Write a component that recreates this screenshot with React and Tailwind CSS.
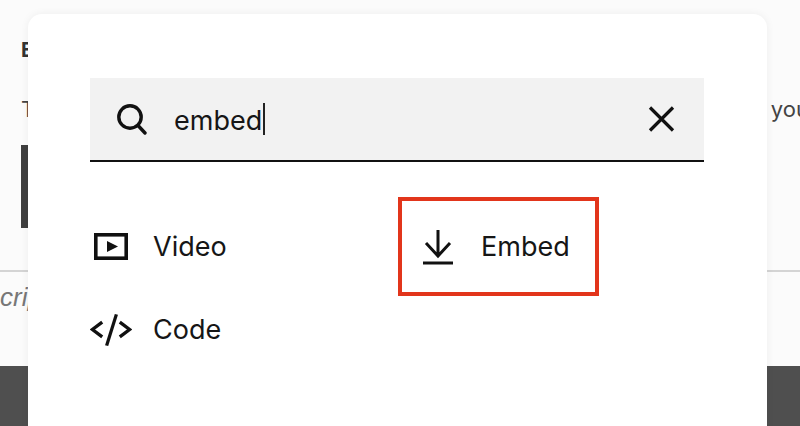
export default function App() {
    return (
        <div className="relative h-[426px] w-[800px] overflow-hidden bg-[#fbfbfb] font-['Inter','Liberation_Sans',sans-serif] text-[#161616]">
            {/* Page behind the dialog */}
            <div className="flex h-full flex-col">
                <div className="h-[272px] border-b-2 border-[#d4d4d4] px-[21px] pt-[38px]">
                    <h2 className="text-[20px] leading-[24px] font-bold text-[#333]">Embed</h2>
                    <p className="mt-[35px] flex justify-between text-[22px] leading-[24px] text-[#444]">
                        <span>The</span>
                        <span className="-mr-[30px]">the you</span>
                    </p>
                    <div className="mt-[24px] h-[83px] w-[300px] bg-[#3f3f3f]"></div>
                </div>
                <p className="h-[94px] pt-[10px] font-['Liberation_Sans',sans-serif] text-[26px] leading-[30px] text-[#777] italic">cription</p>
                <div className="flex-1 bg-[#4f4f4f]"></div>
            </div>

            {/* Dialog */}
            <div className="absolute top-[14px] left-[28px] h-[440px] w-[739px] rounded-[14px] bg-white px-[62px] pt-[64px] shadow-[0_0_8px_rgba(0,0,0,0.06)]">
                <div className="flex h-[84px] w-[614px] items-center border-b-2 border-[#111] bg-[#f2f2f2] pr-[29px] pl-[26px]">
                    <svg width="32" height="32" viewBox="0 0 32 32" fill="none" stroke="#111" strokeWidth="3.4" strokeLinecap="round">
                        <circle cx="14" cy="14" r="11.2" />
                        <path d="M22.5 23 29 30" />
                    </svg>
                    <span className="mt-[3px] ml-[26px] text-[27px] leading-[32px]">embed</span>
                    <span className="ml-[1px] h-[32px] w-[2px] bg-[#222]"></span>
                    <svg className="ml-auto" width="28" height="28" viewBox="0 0 28 28" fill="none" stroke="#111" strokeWidth="3.2">
                        <path d="M3 2.5 26 25.5M26 2.5 3 25.5" />
                    </svg>
                </div>

                <div className="mt-[43px] grid grid-cols-[309px_200px] auto-rows-[83px]">
                    <div className="flex items-center">
                        <span className="flex w-[42px] justify-center">
                            <svg width="34" height="27" viewBox="0 0 34 27" fill="none">
                                <rect x="1.800" y="1.800" width="30.400" height="23.400" stroke="#111" strokeWidth="3.600" />
                                <path d="M13 8 24 13.500 13 19Z" fill="#111" />
                            </svg>
                        </span>
                        <span className="ml-[21px] text-[27px] leading-[32px]">Video</span>
                    </div>
                    <div className="relative -ml-px flex items-center pl-[19px]">
                        <span className="flex w-[42px] justify-center">
                            <svg width="32" height="36" viewBox="0 0 32 36" fill="none" stroke="#111" strokeWidth="3">
                                <path d="M16 1v26M4 14l12 13 12-13" />
                                <path d="M1 34h30" />
                            </svg>
                        </span>
                        <span className="ml-[22px] text-[27px] leading-[32px]">Embed</span>
                        <div className="absolute inset-x-0 -inset-y-[8px] border-[4px] border-[#e2351b]"></div>
                    </div>
                    <div className="flex items-center">
                        <span className="flex w-[42px] justify-center">
                            <svg width="43" height="34" viewBox="0 0 43 34" fill="none" stroke="#111" strokeWidth="3.4">
                                <path d="M12.500 9 2.500 16.500l10 7.500M30.500 9l10 7.500-10 7.500" />
                                <path d="M27 1 17 33" />
                            </svg>
                        </span>
                        <span className="ml-[21px] text-[27px] leading-[32px]">Code</span>
                    </div>
                </div>
            </div>
        </div>
    );
}
